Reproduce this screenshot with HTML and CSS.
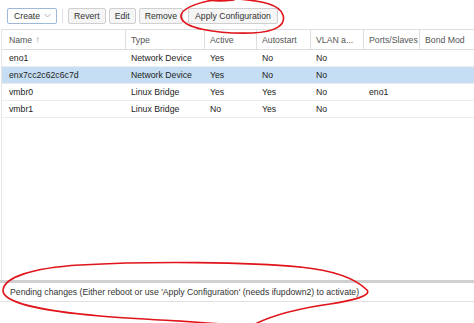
FILE: index.html
```html
<!DOCTYPE html>
<html>
<head>
<meta charset="utf-8">
<link rel="stylesheet" href="styles.css">
</head>
<body>
<div class="panel">
  <div class="toolbar">
    <button class="btn btn-menu">Create <svg class="caret" width="7" height="5" viewBox="0 0 7 5"><path d="M0.5 1 L3.5 4 L6.5 1"/></svg></button>
    <span class="sep"></span>
    <button class="btn">Revert</button>
    <button class="btn">Edit</button>
    <button class="btn">Remove</button>
    <button class="btn apply">Apply Configuration</button>
  </div>
  <div class="grid">
    <div class="row head">
      <div class="cell">Name <span class="arrow">&#8593;</span></div>
      <div class="cell">Type</div>
      <div class="cell">Active</div>
      <div class="cell">Autostart</div>
      <div class="cell">VLAN a...</div>
      <div class="cell">Ports/Slaves</div>
      <div class="cell last">Bond Mod</div>
    </div>
    <div class="row">
      <div class="cell">eno1</div><div class="cell">Network Device</div><div class="cell">Yes</div><div class="cell">No</div><div class="cell">No</div><div class="cell"></div><div class="cell"></div>
    </div>
    <div class="row sel">
      <div class="cell">enx7cc2c62c6c7d</div><div class="cell">Network Device</div><div class="cell">Yes</div><div class="cell">No</div><div class="cell">No</div><div class="cell"></div><div class="cell"></div>
    </div>
    <div class="row">
      <div class="cell">vmbr0</div><div class="cell">Linux Bridge</div><div class="cell">Yes</div><div class="cell">Yes</div><div class="cell">No</div><div class="cell">eno1</div><div class="cell"></div>
    </div>
    <div class="row">
      <div class="cell">vmbr1</div><div class="cell">Linux Bridge</div><div class="cell">No</div><div class="cell">Yes</div><div class="cell">No</div><div class="cell"></div><div class="cell"></div>
    </div>
    <div class="filler"></div>
  </div>
  <div class="footer">Pending changes (Either reboot or use 'Apply Configuration' (needs ifupdown2) to activate)</div>
</div>
<svg class="marks" width="474" height="323" viewBox="0 0 474 323">
  <path d="M214 0 C196 3 180 9 181 17 C183 28 215 34 252 33 C276 32 286 25 283 15 C280 5 264 1 238 -1" />
  <path d="M234 0 C224 1 213 2 206 -1" stroke-width="2.4" />
  <path d="M300 267 C250 262 150 261 80 265 C30 268 4 278 3 290 C2 302 40 311 100 316 C160 321 230 322 275 330" />
  <path d="M300 267 C330 270 355 278 367 290 C372 296 350 301 330 304 C295 309 265 316 245 330" stroke-width="1.8" />
</svg>
</body>
</html>
```
FILE: styles.css
```css
* { box-sizing: border-box; }
html, body { margin: 0; padding: 0; background: #fff; }
body {
  width: 474px;
  height: 323px;
  overflow: hidden;
  position: relative;
  font-family: "Liberation Sans", Arial, sans-serif;
  font-size: 8.7px;
  color: #222;
}
.panel {
  display: flex;
  flex-direction: column;
  height: 323px;
}
.toolbar {
  height: 29px;
  display: flex;
  align-items: center;
  padding: 2px 0 0 7px;
  gap: 3px;
}
.btn {
  font: inherit;
  color: #333;
  height: 16px;
  padding: 0 5px;
  border: 1px solid #cfcfcf;
  background: #f5f5f5;
  border-radius: 2px;
  line-height: 14px;
  display: flex;
  align-items: center;
  gap: 4px;
}
.btn-menu {
  background: #fff;
  border-color: #9fb8d6;
  padding: 0 5px 0 6px;
}
.apply { margin-left: 2px; padding: 0 6px; }
.caret path { fill: none; stroke: #aaa; stroke-width: 0.9; }
.sep {
  width: 1px;
  height: 14px;
  background: #e2e2e2;
  margin: 0 2px;
}
.grid {
  flex: 1;
  display: flex;
  flex-direction: column;
  margin-left: 1px;
  border-left: 1px solid #e6e6e6;
}
.row {
  display: grid;
  grid-template-columns: 124px 79px 52px 54px 53px 56px 1fr;
  height: 17px;
  border-bottom: 1px solid #ececec;
  align-items: center;
}
.row .cell { padding-left: 5px; white-space: nowrap; overflow: hidden; }
.row.head {
  height: 21px;
  border-top: 1px solid #dedede;
  border-bottom: 1px solid #dcdcdc;
  color: #555;
  align-items: stretch;
}
.row.head .cell {
  border-right: 1px solid #dedede;
  display: flex;
  align-items: center;
  padding-left: 5px;
}
.row.head .cell:first-child { padding-left: 7px; }
.row.head .cell.last { border-right: 0; }
.arrow { color: #999; margin-left: 3px; font-size: 10px; }
.row .cell:first-child { padding-left: 7px; }
.row.sel { background: #c5def3; }
.filler { flex: 1; }
.footer {
  height: 22px;
  border-top: 3px solid #d0d0d0;
  border-bottom: 1px solid #e0e0e0;
  padding-left: 10px;
  display: flex;
  align-items: center;
  color: #333;
  margin-bottom: 21px;
}
.marks {
  position: absolute;
  left: 0;
  top: 0;
  pointer-events: none;
}
.marks path {
  fill: none;
  stroke: #e0141a;
  stroke-width: 1.6;
  stroke-linecap: round;
}
```
